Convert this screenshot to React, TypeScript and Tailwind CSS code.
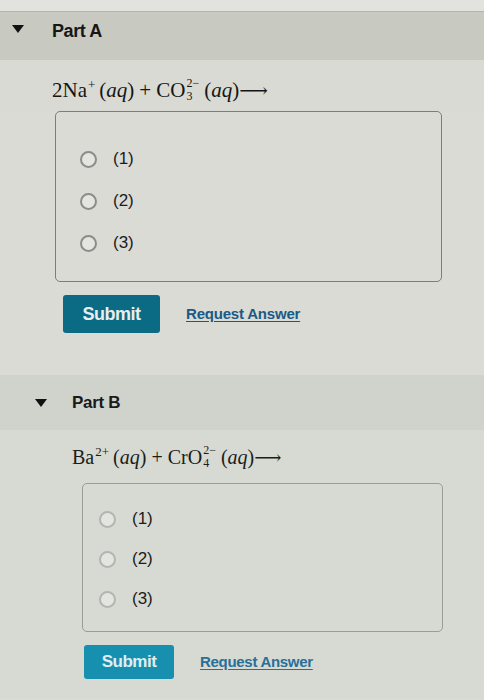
import type { ReactNode } from "react";

const mathFont = "font-['Liberation_Serif','DejaVu_Serif',serif]";

function Caret({ className }: { className: string }) {
  return (
    <svg width="12" height="8" viewBox="0 0 12 8" className={className}>
      <path d="M0 0 L12 0 L6 8 Z" fill="#111" />
    </svg>
  );
}

function Sup({ children }: { children: ReactNode }) {
  return <span className="relative top-[-8px] text-[13px] ml-[1px] mr-[4px]">{children}</span>;
}

// stacked charge over subscript, e.g. CO3 2-
function SupSub({ sup, sub }: { sup: string; sub: string }) {
  return (
    <span className="inline-flex flex-col text-[12px] leading-[13px] align-middle relative top-[-2px] ml-[1px] mr-[5px]">
      <span>{sup}</span>
      <span>{sub}</span>
    </span>
  );
}

function Plus() {
  return <span className="mx-[5px]">+</span>;
}

function Choices({ ring, rows }: { ring: string; rows: string }) {
  return (
    <>
      {["(1)", "(2)", "(3)"].map((c) => (
        <div key={c} className={`flex items-center ${rows}`}>
          <span className={`w-[17px] h-[17px] rounded-full border-2 ${ring} bg-[#e4e5e0]`} />
          <span className="ml-[16px] text-[17px] text-[#1c1c1c]">{c}</span>
        </div>
      ))}
    </>
  );
}

export default function App() {
  return (
    <div className="w-[484px] h-[700px] overflow-hidden bg-[#dadbd4] font-['Liberation_Sans',Arial,sans-serif]">
      <div className="h-[12px] bg-[#e2e2de] border-b border-[#b4b5ad]" />

      {/* Part A */}
      <div className="h-[48px] bg-[#c8c9c1] flex items-start pt-[6px]">
        <Caret className="ml-[12px] mt-[7px]" />
        <span className="ml-[28px] text-[18px] font-bold text-[#161616] tracking-[-0.4px]">Part A</span>
      </div>
      <div className="pl-[52px] pt-[17px] h-[51px] bg-[#d9dad4]">
        <div className={`${mathFont} text-[21px] leading-[26px] text-[#151515] whitespace-nowrap`}>
          2Na<Sup>+</Sup>(<i>aq</i>)<Plus />CO<SupSub sup="2−" sub="3" />(<i>aq</i>)<span className="text-[20px]">⟶</span>
        </div>
      </div>
      <div className="bg-[#dadbd4] pb-[42px]">
        <div className="ml-[55px] w-[387px] h-[171px] border border-[#7d7e79] rounded-[5px] pl-[24px] pt-[37px] flex flex-col gap-[22px]">
          <Choices ring="border-[#8c8d87]" rows="h-[20px]" />
        </div>
        <div className="flex items-center mt-[13px] ml-[63px]">
          <button className="w-[97px] h-[38px] rounded-[3px] bg-[#0b6a84] text-[#e8eeee] text-[18px] font-bold tracking-[-0.5px]">
            Submit
          </button>
          <a className="ml-[26px] text-[15px] font-bold text-[#1a5a86] underline underline-offset-2 tracking-[-0.2px]">
            Request Answer
          </a>
        </div>
      </div>

      {/* Part B */}
      <div className="h-[55px] bg-[#d0d3cb] flex items-center">
        <Caret className="ml-[35px]" />
        <span className="ml-[25px] text-[17px] font-bold text-[#1a1a1a] tracking-[-0.3px]">Part B</span>
      </div>
      <div className="bg-[#d6dad3] pb-[20px]">
        <div className={`pl-[72px] pt-[14px] h-[53px] ${mathFont} text-[20px] leading-[26px] text-[#1c1c1c] whitespace-nowrap`}>
          Ba<Sup>2+</Sup>(<i>aq</i>)<Plus />CrO<SupSub sup="2−" sub="4" />(<i>aq</i>)<span className="text-[19px]">⟶</span>
        </div>
        <div className="ml-[82px] w-[361px] h-[149px] border border-[#9a9c97] rounded-[5px] pl-[16px] pt-[25px] flex flex-col gap-[20px]">
          <Choices ring="border-[#b3b5af]" rows="h-[20px]" />
        </div>
        <div className="flex items-center mt-[13px] ml-[84px]">
          <button className="w-[90px] h-[34px] rounded-[3px] bg-[#1790b0] text-[#dfeef0] text-[17px] font-bold tracking-[-0.5px]">
            Submit
          </button>
          <a className="ml-[26px] text-[15px] font-bold text-[#2a6f98] underline underline-offset-2 tracking-[-0.3px]">
            Request Answer
          </a>
        </div>
      </div>
    </div>
  );
}
